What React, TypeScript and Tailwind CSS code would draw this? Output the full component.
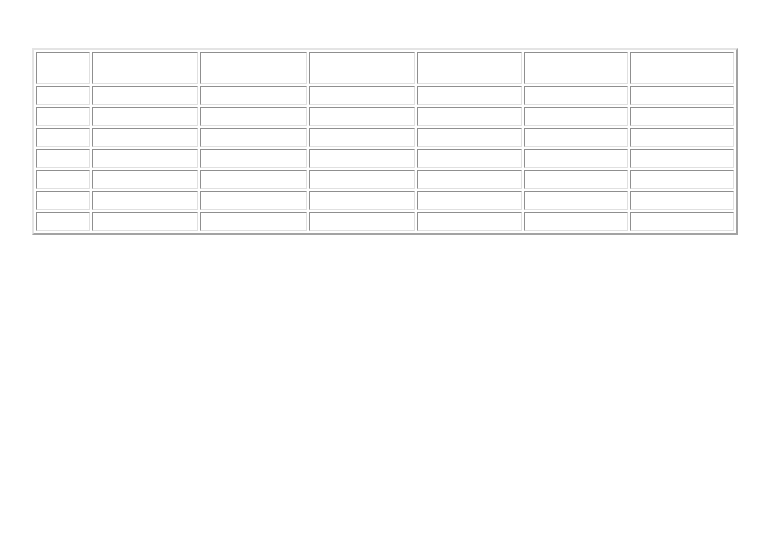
const widths = ["w-[54px]", "w-[106px]", "w-[107px]", "w-[106px]", "w-[105px]", "w-[104px]", "w-[104px]"];

function Cell({ w, tall }: { w?: string; tall?: boolean }) {
  return (
    <td
      className={`${w ?? ""} ${tall ? "h-[32px]" : "h-[19px]"} border border-t-[#8f8f8f] border-l-[#8f8f8f] border-b-[#e0e0e0] border-r-[#e0e0e0] p-0`}
    />
  );
}

export default function App() {
  const rows = Array.from({ length: 7 });
  return (
    <div className="min-h-screen bg-white pl-[32px] pt-[48px] font-['Liberation_Sans',sans-serif]">
      <table className="table-fixed border-separate border-spacing-[2px] border-2 border-t-[#e4e4e4] border-l-[#e4e4e4] border-b-[#a3a3a3] border-r-[#a3a3a3]">
        <tbody>
          <tr>
            {widths.map((w, i) => (
              <Cell key={i} w={w} tall />
            ))}
          </tr>
          {rows.map((_, r) => (
            <tr key={r}>
              {widths.map((_, i) => (
                <Cell key={i} />
              ))}
            </tr>
          ))}
        </tbody>
      </table>
    </div>
  );
}
